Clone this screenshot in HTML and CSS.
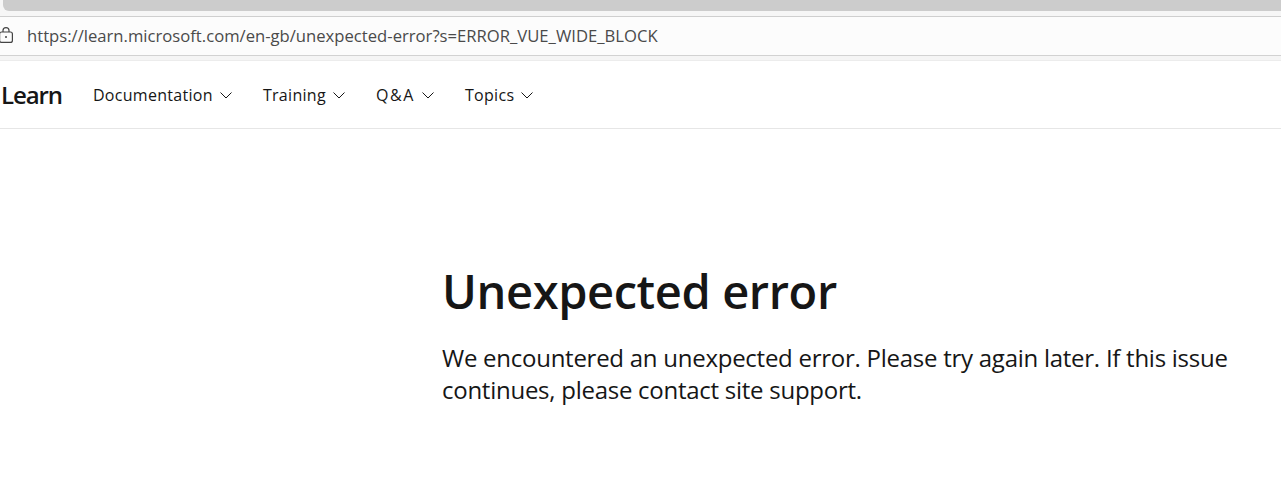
FILE: index.html
```html
<!DOCTYPE html>
<html lang="en">
<head>
  <meta charset="UTF-8">
  <title>Unexpected error</title>
  <link rel="stylesheet" href="styles.css">
</head>
<body>
  <div class="browser-top">
    <div class="scrollbar"></div>
  </div>
  <div class="address-bar">
    <svg class="lock" width="14" height="16" viewBox="0 0 14 16" fill="none" stroke="#444" stroke-width="1.2">
      <path d="M4 5V3.6a3 3 0 0 1 6 0V5"/>
      <rect x="0.6" y="5" width="12.8" height="10.4" rx="2"/>
      <circle cx="7" cy="10" r="1" fill="#444" stroke="none"/>
    </svg>
    <span class="url">https://learn.microsoft.com/en-gb/unexpected-error?s=ERROR_VUE_WIDE_BLOCK</span>
  </div>
  <div class="address-gap"></div>

  <div class="header">
    <span class="brand">Learn</span>
    <nav class="nav">
      <a class="nav-item">Documentation
        <svg class="chevron" width="12" height="7" viewBox="0 0 12 7"><path d="M0.5 0.5L6 6L11.5 0.5"/></svg>
      </a>
      <a class="nav-item">Training
        <svg class="chevron" width="12" height="7" viewBox="0 0 12 7"><path d="M0.5 0.5L6 6L11.5 0.5"/></svg>
      </a>
      <a class="nav-item nav-item-short">Q&amp;A
        <svg class="chevron" width="12" height="7" viewBox="0 0 12 7"><path d="M0.5 0.5L6 6L11.5 0.5"/></svg>
      </a>
      <a class="nav-item">Topics
        <svg class="chevron" width="12" height="7" viewBox="0 0 12 7"><path d="M0.5 0.5L6 6L11.5 0.5"/></svg>
      </a>
    </nav>
  </div>

  <div class="content">
    <h1>Unexpected error</h1>
    <p>We encountered an unexpected error. Please try again later. If this issue continues, please contact site support.</p>
  </div>
</body>
</html>
```

FILE: styles.css
```css
* {
  margin: 0;
  padding: 0;
  box-sizing: border-box;
}

body {
  font-family: "Open Sans", "Noto Sans", sans-serif;
  background: white;
  color: #161616;
  overflow: hidden;
}

.browser-top {
  height: 16px;
  padding-left: 3px;
  background: #f6f6f6;
}

.scrollbar {
  height: 11px;
  background: #cccccc;
  border-bottom-left-radius: 6px;
}

.address-bar {
  display: flex;
  align-items: center;
  height: 40px;
  padding-bottom: 2px;
  background: #fcfcfc;
  border-top: 1px solid #cfcfcf;
  border-bottom: 1px solid #d2d2d2;
}

.lock {
  margin-left: -1px;
  flex-shrink: 0;
}

.url {
  margin-left: 14px;
  font-size: 16.65px;
  color: #4a4a4a;
  white-space: nowrap;
}

.address-gap {
  height: 5px;
  background: #f5f5f5;
  border-bottom: 1px solid #ececec;
}

.header {
  display: flex;
  align-items: center;
  height: 68px;
  border-bottom: 1px solid #e6e6e6;
}

.brand {
  font-size: 24px;
  font-weight: 600;
  letter-spacing: -1.1px;
  margin-left: 1px;
  margin-right: 31px;
}

.nav {
  display: flex;
  gap: 31px;
}

.nav-item {
  display: flex;
  align-items: center;
  gap: 7px;
  font-size: 16px;
  letter-spacing: 0.3px;
  color: #161616;
}

.nav-item-short {
  letter-spacing: 1.6px;
}

.chevron {
  fill: none;
  stroke: #161616;
  stroke-width: 1;
  margin-top: 2px;
}

.content {
  padding: 130px 40px 0 442px;
}

.content h1 {
  font-size: 47px;
  font-weight: 600;
  letter-spacing: -0.4px;
  line-height: 64px;
  margin-bottom: 19px;
}

.content p {
  font-size: 24px;
  letter-spacing: -0.26px;
  line-height: 32px;
}
```
